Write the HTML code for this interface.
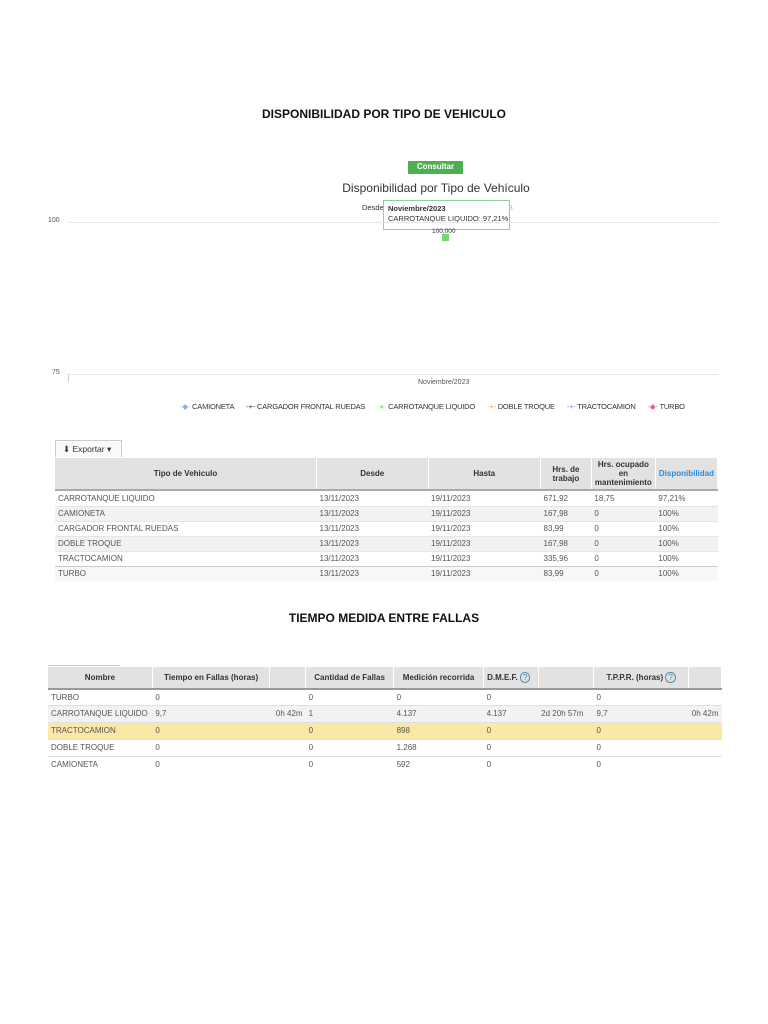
<!DOCTYPE html>
<html><head><meta charset="utf-8"><style>
body{margin:0;width:768px;height:1024px;background:#fff;position:relative;font-family:"Liberation Sans",Arial,sans-serif;overflow:hidden}
.a{position:absolute}
.t{font-size:8px;color:#555}
table{border-collapse:collapse;position:absolute;font-size:8px;color:#555}
td,th{padding:0 3px;white-space:nowrap;overflow:hidden}
th{font-weight:bold;color:#333;background:#e2e2e2;border-right:1px solid #fff}
.g{display:inline-block;width:12px}
</style></head><body>
<div class="a" style="top:107px;left:0;width:768px;text-align:center;font-weight:bold;font-size:12px;color:#111">DISPONIBILIDAD POR TIPO DE VEHICULO</div>
<div class="a" style="top:161px;left:408px;width:55px;height:13px;background:#4caf50;color:#fff;font-size:8px;font-weight:bold;text-align:center;line-height:11px;border-radius:1px">Consultar</div>
<div class="a" style="top:181px;left:0;width:872px;text-align:center;font-size:12px;color:#333">Disponibilidad por Tipo de Vehículo</div>
<div class="a t" style="top:203px;left:362px;color:#333;font-size:7.5px">Desde</div>
<div class="a t" style="top:203px;left:470px;color:#bbb;font-size:7.5px">19/nov./2023</div>
<div class="a" style="top:200px;left:383px;width:127px;height:30px;border:1px solid #8bd68b;background:rgba(255,255,255,.95);font-size:7.5px;color:#333;padding:3px 4px;box-sizing:border-box;line-height:10px;white-space:nowrap"><b>Noviembre/2023</b><br>CARROTANQUE LIQUIDO: 97,21%</div>
<div class="a t" style="top:228px;left:432px;color:#333;font-size:6.5px">100,000</div>
<div class="a" style="top:234px;left:442px;width:7px;height:7px;background:#6cdc6c"></div>
<div class="a t" style="top:217px;left:48px;font-size:7px">100</div>
<div class="a" style="top:222px;left:68px;width:650px;height:1px;background:#e6e6e6"></div>
<div class="a t" style="top:369px;left:52px;font-size:7px">75</div>
<div class="a" style="top:374px;left:68px;width:650px;height:1px;background:#e6e6e6"></div>
<div class="a" style="top:374px;left:68px;width:1px;height:8px;background:#ccc"></div>
<div class="a t" style="top:379px;left:418px;font-size:7px">Noviembre/2023</div>
<div class="a" style="top:402px;left:180px;font-size:7.5px;color:#333;white-space:nowrap;letter-spacing:-0.2px">
<span style="color:#7cb5ec">-◆-</span> CAMIONETA<span class="g"></span><span style="color:#333">-+-</span> CARGADOR FRONTAL RUEDAS<span class="g"></span><span style="color:#90ed7d">-●-</span> CARROTANQUE LIQUIDO<span class="g"></span><span style="color:#f7a35c">-+-</span> DOBLE TROQUE<span class="g"></span><span style="color:#8085e9">-+-</span> TRACTOCAMION<span class="g"></span><span style="color:#f15c80">-◆-</span> TURBO</div>
<div class="a" style="top:440px;left:55px;width:67px;height:17px;border:1px solid #ccc;border-bottom:none;background:#fafafa;font-size:8.5px;color:#333;line-height:17px;box-sizing:border-box;padding-left:7px">⬇ Exportar ▾</div>
<table style="top:458px;left:55px;width:663px">
<tr style="height:32px;border-bottom:2px solid #aaa"><th style="width:256px">Tipo de Vehiculo</th><th style="width:105px">Desde</th><th style="width:106px">Hasta</th><th style="width:44px">Hrs. de<br>trabajo</th><th style="width:57px">Hrs. ocupado<br>en<br>mantenimiento</th><th style="color:#2a8ad4">Disponibilidad</th></tr>
<tr style="height:16px;border-bottom:1px solid #e6e6e6"><td>CARROTANQUE LIQUIDO</td><td>13/11/2023</td><td>19/11/2023</td><td>671,92</td><td>18,75</td><td>97,21%</td></tr>
<tr style="height:15px;background:#f2f2f2;border-bottom:1px solid #e6e6e6"><td>CAMIONETA</td><td>13/11/2023</td><td>19/11/2023</td><td>167,98</td><td>0</td><td>100%</td></tr>
<tr style="height:15px;border-bottom:1px solid #e6e6e6"><td>CARGADOR FRONTAL RUEDAS</td><td>13/11/2023</td><td>19/11/2023</td><td>83,99</td><td>0</td><td>100%</td></tr>
<tr style="height:15px;background:#f2f2f2;border-bottom:1px solid #e6e6e6"><td>DOBLE TROQUE</td><td>13/11/2023</td><td>19/11/2023</td><td>167,98</td><td>0</td><td>100%</td></tr>
<tr style="height:15px;border-bottom:1px solid #ccc"><td>TRACTOCAMION</td><td>13/11/2023</td><td>19/11/2023</td><td>335,96</td><td>0</td><td>100%</td></tr>
<tr style="height:15px;background:#f7f7f7"><td>TURBO</td><td>13/11/2023</td><td>19/11/2023</td><td>83,99</td><td>0</td><td>100%</td></tr>
</table>
<div class="a" style="top:611px;left:0;width:768px;text-align:center;font-weight:bold;font-size:12px;color:#111">TIEMPO MEDIDA ENTRE FALLAS</div>
<div class="a" style="top:665px;left:48px;width:72px;height:1px;background:#ccc"></div>
<table style="top:667px;left:48px;width:674px">
<tr style="height:22px;border-bottom:2px solid #999"><th style="width:98px">Nombre</th><th style="width:112px">Tiempo en Fallas (horas)</th><th style="width:29px"></th><th style="width:82px">Cantidad de Fallas</th><th style="width:84px">Medición recorrida</th><th style="width:48px;text-align:left">D.M.E.F. <span style="color:#58a;border:1px solid #58a;border-radius:50%;padding:0 2px;font-weight:normal">?</span></th><th style="width:49px"></th><th style="width:90px">T.P.P.R. (horas) <span style="color:#58a;border:1px solid #58a;border-radius:50%;padding:0 2px;font-weight:normal">?</span></th><th></th></tr>
<tr style="height:16px;border-bottom:1px solid #e0e0e0"><td>TURBO</td><td>0</td><td></td><td>0</td><td>0</td><td>0</td><td></td><td>0</td><td></td></tr>
<tr style="height:17px;background:#f2f2f2;border-bottom:1px solid #e0e0e0"><td>CARROTANQUE LIQUIDO</td><td>9,7</td><td style="text-align:right">0h 42m</td><td>1</td><td>4.137</td><td>4.137</td><td>2d 20h 57m</td><td>9,7</td><td style="text-align:right">0h 42m</td></tr>
<tr style="height:17px;background:#fbe7a6;border-bottom:1px solid #e0e0e0"><td>TRACTOCAMION</td><td>0</td><td></td><td>0</td><td>898</td><td>0</td><td></td><td>0</td><td></td></tr>
<tr style="height:17px;border-bottom:1px solid #e0e0e0"><td>DOBLE TROQUE</td><td>0</td><td></td><td>0</td><td>1.268</td><td>0</td><td></td><td>0</td><td></td></tr>
<tr style="height:16px"><td>CAMIONETA</td><td>0</td><td></td><td>0</td><td>592</td><td>0</td><td></td><td>0</td><td></td></tr>
</table>
</body></html>
